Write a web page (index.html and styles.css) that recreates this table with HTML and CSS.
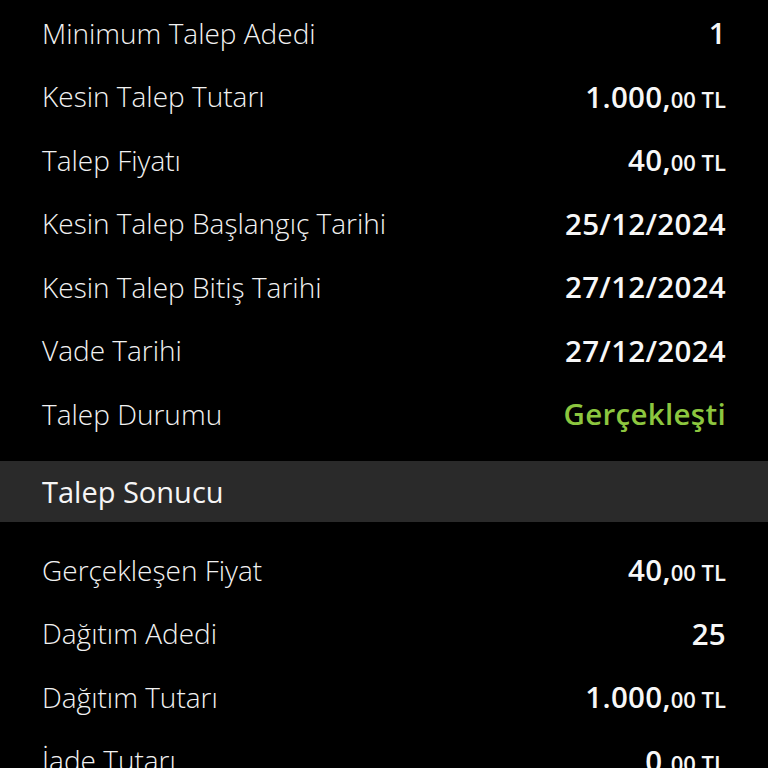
FILE: index.html
```html
<!DOCTYPE html>
<html lang="tr">
<head>
<meta charset="utf-8">
<link rel="stylesheet" href="styles.css">
</head>
<body>
<div class="page">
  <div class="list first">
    <div class="row"><span class="label">Minimum Talep Adedi</span><span class="value">1</span></div>
    <div class="row"><span class="label">Kesin Talep Tutarı</span><span class="value">1.000,<span class="small">00 TL</span></span></div>
    <div class="row"><span class="label">Talep Fiyatı</span><span class="value">40,<span class="small">00 TL</span></span></div>
    <div class="row"><span class="label">Kesin Talep Başlangıç Tarihi</span><span class="value">25/12/2024</span></div>
    <div class="row"><span class="label">Kesin Talep Bitiş Tarihi</span><span class="value">27/12/2024</span></div>
    <div class="row"><span class="label">Vade Tarihi</span><span class="value">27/12/2024</span></div>
    <div class="row"><span class="label">Talep Durumu</span><span class="value green">Gerçekleşti</span></div>
  </div>
  <div class="section">Talep Sonucu</div>
  <div class="list">
    <div class="row"><span class="label">Gerçekleşen Fiyat</span><span class="value">40,<span class="small">00 TL</span></span></div>
    <div class="row"><span class="label">Dağıtım Adedi</span><span class="value">25</span></div>
    <div class="row"><span class="label">Dağıtım Tutarı</span><span class="value">1.000,<span class="small">00 TL</span></span></div>
    <div class="row"><span class="label">İade Tutarı</span><span class="value">0,<span class="small">00 TL</span></span></div>
  </div>
</div>
</body>
</html>
```
FILE: styles.css
```css
html, body {
  margin: 0;
  padding: 0;
  background: #000;
}
body {
  height: 768px;
  overflow: hidden;
  font-family: "Open Sans", "Noto Sans", sans-serif;
  color: #fff;
}
.page {
  display: flex;
  flex-direction: column;
}
.list {
  display: flex;
  flex-direction: column;
  padding: 16px 42px 0;
}
.list.first {
  padding-top: 1px;
  padding-bottom: 15.5px;
}
.row {
  height: 63.5px;
  display: flex;
  align-items: center;
  justify-content: space-between;
  white-space: nowrap;
}
.label {
  font-size: 28px;
  font-weight: 300;
  color: #f2f2f2;
}
.value {
  font-size: 29.5px;
  font-weight: 600;
  letter-spacing: 0.3px;
  color: #f7f7f7;
}
.value .small {
  font-size: 22px;
  letter-spacing: 0;
}
.green {
  color: #8cc63f;
}
.section {
  height: 61px;
  background: #2a2a2a;
  display: flex;
  align-items: center;
  padding: 0 42px;
  font-size: 29px;
  font-weight: 400;
  color: #f5f5f5;
}
```
